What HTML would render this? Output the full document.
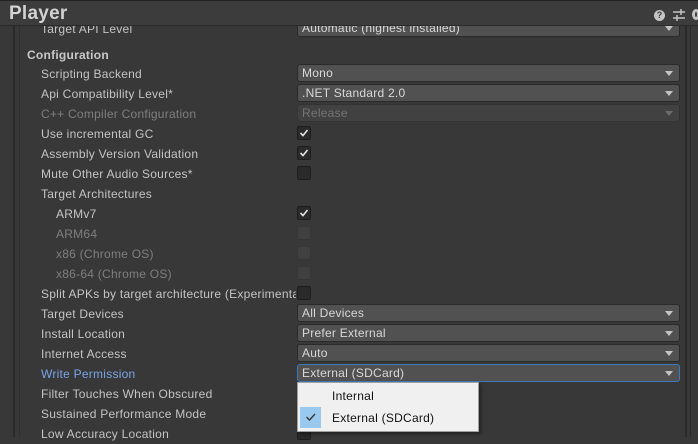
<!DOCTYPE html><html><head><style>
*{margin:0;padding:0;box-sizing:border-box}
body{width:698px;height:437px;overflow:hidden;background:#383838;font-family:"Liberation Sans",sans-serif;font-size:12px;color:#c4c4c4;position:relative;letter-spacing:0.25px}
.l{position:absolute;white-space:nowrap;line-height:20px;height:20px;margin-top:1px}
.d{color:#7f7f7f}
.dd{position:absolute;left:297px;width:383px;height:18px;background:#515151;border:1px solid #2a2a2a;border-radius:3px;padding-left:4px;line-height:17px;color:#d8d8d8}
.dd::after{content:"";position:absolute;right:6px;top:6px;border-left:4px solid transparent;border-right:4px solid transparent;border-top:5px solid #c4c4c4}
.dd.dis{background:#414141;color:#747474;border-color:#333}
.dd.dis::after{border-top-color:#6a6a6a}
.cb{position:absolute;left:297px;width:14px;height:14px;background:#2a2a2a;border:1px solid #1e1e1e;border-radius:2px}
.cb.dis{background:#404040;border-color:#363636}
.cb svg{position:absolute;left:1px;top:1px}
</style></head><body>
<div style="position:absolute;left:13px;top:0;width:2px;height:437px;background:#2a2a2a"></div>
<div style="position:absolute;left:19px;top:0;width:1px;height:437px;background:#2f2f2f"></div>
<div style="position:absolute;left:685px;top:0;width:2px;height:437px;background:#2a2a2a"></div>
<div style="position:absolute;left:690px;top:0;width:1px;height:437px;background:#2a2a2a"></div>

<div class="l" style="left:41px;top:18px">Target API Level</div>
<div class="dd" style="top:19px">Automatic (highest installed)</div>

<div style="position:absolute;left:0;top:0;width:698px;height:26px;background:#3c3c3c;border-top:1px solid #232323;border-bottom:1px solid #2a2a2a"></div>
<div style="position:absolute;left:9px;top:2px;font-size:19px;font-weight:bold;color:#d2d2d2;line-height:24px">Player</div>
<div style="position:absolute;left:654px;top:10px;width:11px;height:11px;border-radius:50%;background:#c4c4c4;color:#3c3c3c;font-size:9px;font-weight:bold;text-align:center;line-height:11px;letter-spacing:0">?</div>
<svg style="position:absolute;left:673px;top:9px" width="12" height="12"><path d="M0 3H12M0 9H12M8 0V6M4 6V12" stroke="#c4c4c4" stroke-width="1.5"/></svg>
<div style="position:absolute;left:692px;top:9px;width:8px;height:11px;border-radius:50%;border:3px solid #c4c4c4"></div>

<div class="l" style="left:27px;top:44px;font-weight:bold;color:#c8c8c8">Configuration</div>

<div class="l" style="left:41px;top:63px">Scripting Backend</div><div class="dd" style="top:64px">Mono</div>
<div class="l" style="left:41px;top:83px">Api Compatibility Level*</div><div class="dd" style="top:84px">.NET Standard 2.0</div>
<div class="l d" style="left:41px;top:103px">C++ Compiler Configuration</div><div class="dd dis" style="top:104px">Release</div>
<div class="l" style="left:41px;top:123px">Use incremental GC</div><div class="cb" style="top:126px"><svg width="10" height="10"><path d="M1.5 5L4 7.5L8.5 2" stroke="#e0e0e0" stroke-width="1.6" fill="none"/></svg></div>
<div class="l" style="left:41px;top:143px">Assembly Version Validation</div><div class="cb" style="top:146px"><svg width="10" height="10"><path d="M1.5 5L4 7.5L8.5 2" stroke="#e0e0e0" stroke-width="1.6" fill="none"/></svg></div>
<div class="l" style="left:41px;top:163px">Mute Other Audio Sources*</div><div class="cb" style="top:166px"></div>
<div class="l" style="left:41px;top:183px">Target Architectures</div>
<div class="l" style="left:56px;top:203px">ARMv7</div><div class="cb" style="top:206px"><svg width="10" height="10"><path d="M1.5 5L4 7.5L8.5 2" stroke="#e0e0e0" stroke-width="1.6" fill="none"/></svg></div>
<div class="l d" style="left:56px;top:223px">ARM64</div><div class="cb dis" style="top:226px"></div>
<div class="l d" style="left:56px;top:243px">x86 (Chrome OS)</div><div class="cb dis" style="top:246px"></div>
<div class="l d" style="left:56px;top:263px">x86-64 (Chrome OS)</div><div class="cb dis" style="top:266px"></div>
<div class="l" style="left:41px;top:283px;width:255px;overflow:hidden">Split APKs by target architecture (Experimental)</div><div class="cb" style="top:286px"></div>
<div class="l" style="left:41px;top:303px">Target Devices</div><div class="dd" style="top:304px">All Devices</div>
<div class="l" style="left:41px;top:323px">Install Location</div><div class="dd" style="top:324px">Prefer External</div>
<div class="l" style="left:41px;top:343px">Internet Access</div><div class="dd" style="top:344px">Auto</div>
<div class="l" style="left:41px;top:363px;color:#7aa5e6">Write Permission</div><div class="dd" style="top:364px;border-color:#3a79bb">External (SDCard)</div>
<div class="l" style="left:41px;top:383px">Filter Touches When Obscured</div>
<div class="l" style="left:41px;top:403px">Sustained Performance Mode</div>
<div class="l" style="left:41px;top:423px">Low Accuracy Location</div>
<div class="cb" style="top:426px"></div>

<div style="position:absolute;left:297px;top:382px;width:182px;height:50px;background:#f0f0f0;border:1px solid #a0a0a0;box-shadow:2px 2px 3px rgba(0,0,0,.4)"></div>
<div style="position:absolute;left:300px;top:407px;width:21px;height:21px;background:#99c9ef"></div>
<svg style="position:absolute;left:305px;top:412px" width="12" height="10"><path d="M1.5 5L4.5 8L10 2" stroke="#333" stroke-width="1.3" fill="none"/></svg>
<div class="l" style="left:332px;top:385px;color:#111">Internal</div>
<div class="l" style="left:332px;top:407px;color:#111">External (SDCard)</div>
</body></html>
